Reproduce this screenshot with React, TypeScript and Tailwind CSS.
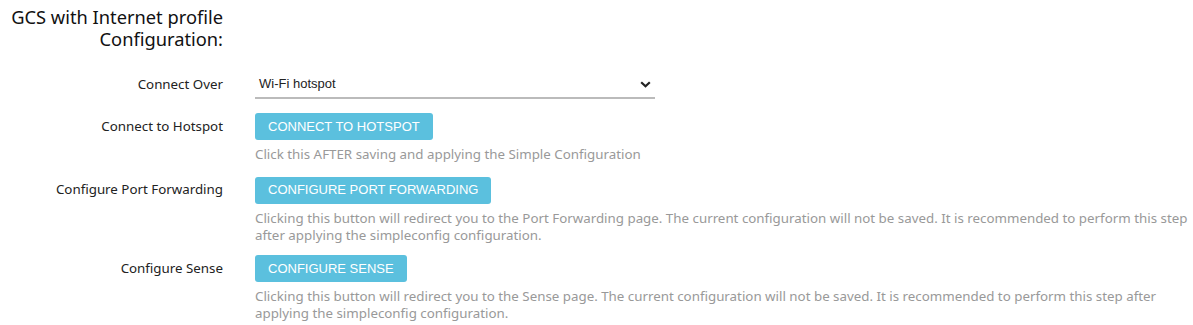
const segoe = "font-['Noto_Sans',sans-serif]";
const arial = "font-['Liberation_Sans',Arial,sans-serif]";

function Row({
  label,
  children,
  className = "",
}: {
  label: string;
  children: React.ReactNode;
  className?: string;
}) {
  return (
    <div className={`flex ${className}`}>
      <div className="w-[223px] shrink-0 text-right text-[13.33px] text-[#222] leading-[27px]">
        {label}
      </div>
      <div className="ml-[32px] flex-1">{children}</div>
    </div>
  );
}

function InfoButton({ children }: { children: React.ReactNode }) {
  return (
    <button
      className={`${arial} h-[27px] rounded-[3px] bg-[#5bc0de] px-[13px] text-[13px] text-white uppercase`}
    >
      {children}
    </button>
  );
}

function Help({ children }: { children: React.ReactNode }) {
  return (
    <p className="mt-[6px] pr-1 text-[13.33px] leading-[17px] text-[#999]">{children}</p>
  );
}

export default function App() {
  return (
    <div className={`${segoe} h-[325px] w-[1193px] overflow-hidden bg-white`}>
      <h1 className="w-[223px] pt-[6px] text-right text-[18.3px] leading-[22px] text-[#111]">
        GCS with Internet profile Configuration:
      </h1>

      <Row label="Connect Over" className="mt-[21px]">
        <div className="flex h-[28px] w-[400px] items-center justify-between border-b-2 border-[#bbb] pl-[4px] pr-[4px]">
          <span className={`${arial} text-[13px] text-[#222]`}>Wi-Fi hotspot</span>
          <svg width="11" height="7" viewBox="0 0 11 7" className="mt-[1px]">
            <polyline
              points="1.2,1.2 5.5,5.3 9.8,1.2"
              fill="none"
              stroke="#222"
              strokeWidth="2.2"
            />
          </svg>
        </div>
      </Row>

      <Row label="Connect to Hotspot" className="mt-[14px]">
        <InfoButton>Connect to Hotspot</InfoButton>
        <Help>Click this AFTER saving and applying the Simple Configuration</Help>
      </Row>

      <Row label="Configure Port Forwarding" className="mt-[13px]">
        <InfoButton>Configure Port Forwarding</InfoButton>
        <Help>
          Clicking this button will redirect you to the Port Forwarding page. The current
          configuration will not be saved. It is recommended to perform this step after applying
          the simpleconfig configuration.
        </Help>
      </Row>

      <Row label="Configure Sense" className="mt-[11px]">
        <InfoButton>Configure Sense</InfoButton>
        <Help>
          Clicking this button will redirect you to the Sense page. The current configuration will
          not be saved. It is recommended to perform this step after applying the simpleconfig
          configuration.
        </Help>
      </Row>
    </div>
  );
}
